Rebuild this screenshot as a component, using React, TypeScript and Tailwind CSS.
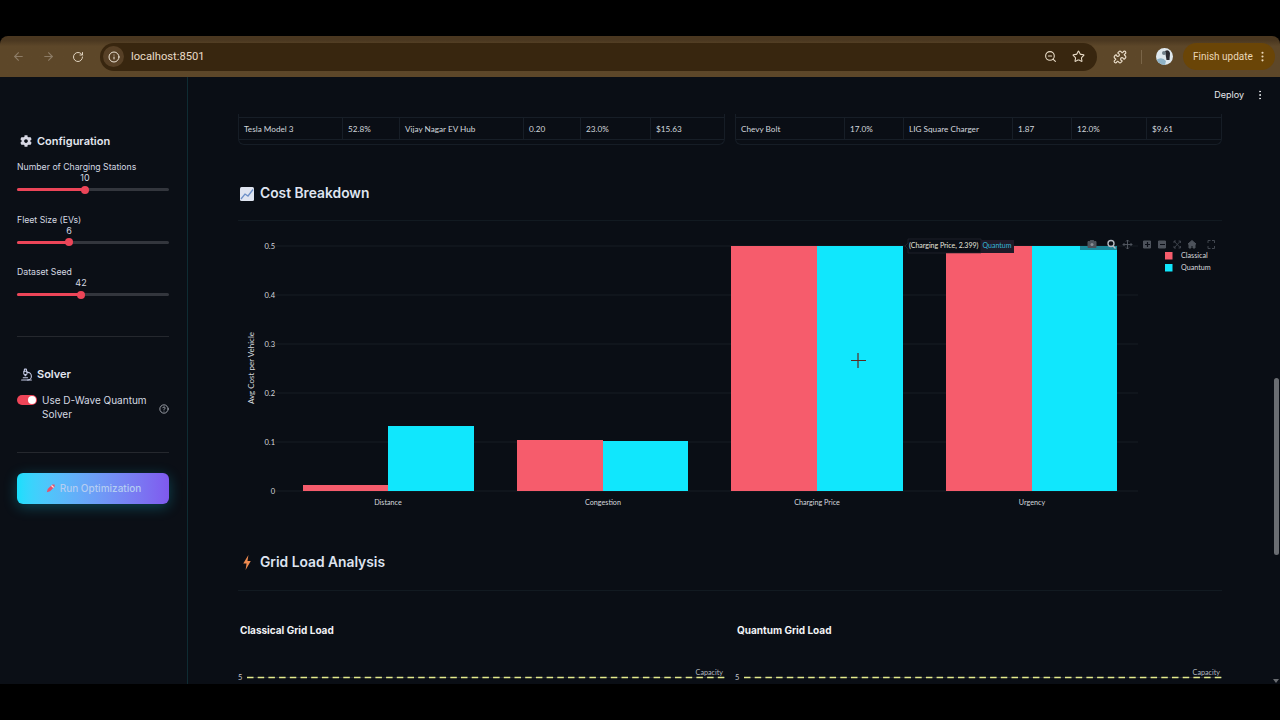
import { ArrowLeft, ArrowRight, RotateCw, Info, ZoomOut, Star, Puzzle, EllipsisVertical, CircleHelp, Microscope } from "lucide-react";
import { FaCog } from "react-icons/fa";

// slider values for the sidebar
const sliders = [
  { label: "Number of Charging Stations", value: "10", pct: 44.7 },
  { label: "Fleet Size (EVs)", value: "6", pct: 34.2 },
  { label: "Dataset Seed", value: "42", pct: 42.1 },
];

const leftRow = ["Tesla Model 3", "52.8%", "Vijay Nagar EV Hub", "0.20", "23.0%", "$15.63"];
const rightRow = ["Chevy Bolt", "17.0%", "LIG Square Charger", "1.87", "12.0%", "$9.61"];

// page coordinates, the svg viewBox starts at the chart's top left
const bars = [
  { x: 303, w: 85, top: 485, fill: "#f65c6c" },
  { x: 388, w: 86, top: 426, fill: "#10e7fd" },
  { x: 517, w: 86, top: 440, fill: "#f65c6c" },
  { x: 603, w: 85, top: 441, fill: "#10e7fd" },
  { x: 731, w: 86, top: 246, fill: "#f65c6c" },
  { x: 817, w: 86, top: 246, fill: "#10e7fd" },
  { x: 946, w: 86, top: 246, fill: "#f65c6c" },
  { x: 1032, w: 85, top: 246, fill: "#10e7fd" },
];

const yTicks = [
  { y: 491, t: "0" },
  { y: 442, t: "0.1" },
  { y: 393, t: "0.2" },
  { y: 344, t: "0.3" },
  { y: 295, t: "0.4" },
  { y: 246, t: "0.5" },
];

const xTicks = [
  { x: 388, t: "Distance" },
  { x: 603, t: "Congestion" },
  { x: 817, t: "Charging Price" },
  { x: 1032, t: "Urgency" },
];

function Slider({ label, value, pct }: { label: string; value: string; pct: number }) {
  return (
    <div className="w-[152px]">
      <div className="h-[12px] text-[8.7px] leading-[12px] text-[#d5d9e2]">{label}</div>
      <div className="relative h-[12px]">
        <span
          className="absolute top-0 -translate-x-1/2 text-[9px] leading-[10px] text-[#d5d9e2]"
          style={{ left: `${pct}%` }}
        >
          {value}
        </span>
      </div>
      <div className="relative flex h-[9px] items-center">
        <div className="h-[3px] w-full rounded-full bg-[#33363d]" />
        <div className="absolute left-0 h-[3px] rounded-full bg-[#ec4558]" style={{ width: `${pct}%` }} />
        <div
          className="absolute h-[8px] w-[8px] -translate-x-1/2 rounded-full bg-[#ec4558]"
          style={{ left: `${pct}%` }}
        />
      </div>
    </div>
  );
}

function Sidebar() {
  return (
    <aside className="flex h-full w-[188px] shrink-0 flex-col border-r border-[#0f2c33] bg-[#0b0f16] pl-[17px] pt-[54px]">
      <div className="flex h-[20px] items-center gap-[5px] pl-[3px] text-[11px] font-semibold text-[#e4e7f0]">
        <FaCog className="h-[12px] w-[12px] text-[#d8d8e4]" />
        Configuration
      </div>
      <div className="mt-[10px] flex flex-col gap-[19.5px]">
        {sliders.map((s) => (
          <Slider key={s.label} {...s} />
        ))}
      </div>
      <div className="mt-[37px] h-px w-[152px] bg-[#25282e]" />
      <div className="mt-[27px] flex h-[20px] items-center gap-[4px] pl-[3px] text-[11px] font-semibold text-[#e4e7f0]">
        <Microscope className="h-[13px] w-[13px] text-[#c5cbe6]" />
        Solver
      </div>
      <div className="mt-[9px] flex w-[152px] items-start">
        <div className="mt-[2px] flex h-[10px] w-[20px] shrink-0 items-center justify-end rounded-full bg-[#ef4558] pr-[1px]">
          <div className="h-[8px] w-[8px] rounded-full bg-white" />
        </div>
        <div className="ml-[5px] w-[112px] text-[10px] leading-[14px] text-[#d5d9e2]">Use D-Wave Quantum Solver</div>
        <CircleHelp className="ml-auto mt-[3px] h-[10px] w-[10px] self-center text-[#b5b8c0]" />
      </div>
      <div className="mt-[31px] h-px w-[152px] bg-[#25282e]" />
      <button className="mt-[20px] flex h-[31px] w-[152px] items-center justify-center gap-[4px] rounded-[6px] bg-gradient-to-r from-[#17dffd] to-[#7f59ee] text-[10px] font-medium text-[#b4cdf2] shadow-[0_3px_14px_rgba(20,200,230,0.3)]">
        <svg viewBox="0 0 12 12" className="h-[11px] w-[11px]">
          <path d="M2 10 L3 6.5 L8 1.5 L10.5 1.5 L10.5 4 L5.5 9 Z" fill="#e8506a" />
          <path d="M7 2.5 L9.5 5" stroke="#f0d8e0" strokeWidth="1.2" />
          <circle cx="8.2" cy="3.8" r="0.9" fill="#f5e6ea" />
        </svg>
        Run Optimization
      </button>
    </aside>
  );
}

function BrowserBar() {
  return (
    <div className="flex h-[41px] shrink-0 items-center rounded-t-[8px] bg-gradient-to-b from-[#4a3720] from-10% to-[#5d4729] to-25% pl-[12px] pr-[5px] text-[#e9dcc8]">
      <ArrowLeft className="h-[13px] w-[13px] text-[#8d7c66]" />
      <ArrowRight className="ml-[17px] h-[13px] w-[13px] text-[#8d7c66]" />
      <RotateCw className="ml-[17px] h-[12px] w-[12px] text-[#e0d3bf]" />
      <div className="ml-[16px] flex h-[28px] flex-1 items-center rounded-full bg-[#38260f] pl-[3px] pr-[12px]">
        <div className="flex h-[21px] w-[21px] items-center justify-center rounded-full bg-[#574026]">
          <Info className="h-[12px] w-[12px] text-[#efe6d8]" />
        </div>
        <span className="ml-[7px] pt-[2px] font-['Roboto',sans-serif] text-[11.2px] text-[#e9dcc8]">localhost:8501</span>
        <ZoomOut className="ml-auto h-[13px] w-[13px]" />
        <Star className="ml-[15px] h-[13px] w-[13px]" />
      </div>
      <Puzzle className="ml-[16px] h-[14px] w-[14px]" />
      <div className="ml-[14px] h-[14px] w-px bg-[#7a6548]" />
      <svg viewBox="0 0 17 17" className="ml-[14px] h-[17px] w-[17px] rounded-full">
        <rect width="17" height="17" fill="#dfe8ee" />
        <path d="M0 12 Q6 8 10 13 L9 17 H0 Z" fill="#8fb2c6" />
        <path d="M9 3 Q13 1 14 5 L13.500 12 L10.500 12 Z" fill="#2a2a30" />
        <circle cx="8" cy="5" r="2" fill="#6e7e88" />
      </svg>
      <div className="ml-[10px] flex h-[27px] w-[92px] items-center rounded-full bg-[#6a4507] pl-[10px]">
        <span className="font-['Roboto',sans-serif] text-[10px] text-[#ebd8b8]">Finish update</span>
        <EllipsisVertical className="ml-[3px] h-[13px] w-[13px] text-[#ebd8b8]" />
      </div>
    </div>
  );
}

function TableStub({ cols, row }: { cols: string; row: string[] }) {
  return (
    <div className="h-[31px] rounded-b-[6px] border-x border-b border-[#161d26] pb-[5px] pt-[3px]">
      <div
        className="grid h-[23px] border-y border-[#171e27] font-['Lato',sans-serif] text-[8.2px] leading-[22px] text-[#d3d7dd]"
        style={{ gridTemplateColumns: cols }}
      >
        {row.map((cell, i) => (
          <div key={cell} className={i > 0 ? "border-l border-[#171e27] pl-[5px]" : "pl-[5px]"}>
            {cell}
          </div>
        ))}
      </div>
    </div>
  );
}

function CostChart() {
  return (
    <svg viewBox="238 221 984 295" className="block h-[295px] w-[984px] font-['Lato',sans-serif]">
      {yTicks.map((t) => (
        <g key={t.t}>
          <line x1={275} x2={1138} y1={t.y} y2={t.y} stroke="#171c24" strokeWidth="1" />
          <text x={275} y={t.y + 2.5} textAnchor="end" fontSize="7.5" fill="#d5d8de">
            {t.t}
          </text>
        </g>
      ))}
      {bars.map((b) => (
        <rect key={b.x} x={b.x} y={b.top} width={b.w} height={491 - b.top} fill={b.fill} />
      ))}
      {xTicks.map((t) => (
        <text key={t.t} x={t.x} y={505} textAnchor="middle" fontSize="7.2" fill="#d5d8de">
          {t.t}
        </text>
      ))}
      <text x={254} y={368} fontSize="8" fill="#d5d8de" textAnchor="middle" transform="rotate(-90 254 368)">
        Avg Cost per Vehicle
      </text>

      {/* crosshair cursor */}
      <path d="M858 353V368M851 360.5H866" stroke="#5b2a22" strokeWidth="1.2" />

      {/* hover labels */}
      <path d="M905 246 L908 243 V239 H981 V253 H908 V249 Z" fill="#0a0e16" stroke="#2a2e36" strokeWidth="0.6" />
      <text x={909} y={248} fontSize="7" fill="#e6e6de">
        (Charging Price, 2.399)
      </text>
      <rect x={981} y={240} width={33} height={13} fill="#1f1a28" />
      <text x={982.500} y={248} fontSize="7" fill="#35b8d8">
        Quantum
      </text>

      {/* modebar */}
      <rect x={1080} y={246} width={37} height={4} fill="#1b8a9c" />
      <g fill="#4d525b" stroke="#4d525b">
        <path d="M1088 241.500h1.500l.800-1h3.400l.800 1h1.500v6h-8z" />
        <path d="M1143.500 241h7v7h-7z" />
        <path d="M1158.500 241h7v7h-7z" />
        <path d="M1192 240.500l4 3.500h-1v4h-2v-2.500h-2v2.500h-2v-4h-1z" />
      </g>
      <circle cx="1092" cy="244.500" r="1.500" fill="#8a8e96" />
      <circle cx="1111" cy="243.500" r="3" fill="none" stroke="#b5bac2" strokeWidth="1.400" />
      <path d="M1113 246l2.500 2.500" stroke="#b5bac2" strokeWidth="1.400" />
      <path
        d="M1127.500 240v9M1123 244.500h9M1127.500 240l-1.500 1.500M1127.500 240l1.500 1.500M1127.500 249l-1.500-1.500M1127.500 249l1.500-1.500M1123 244.500l1.500-1.500M1123 244.500l1.500 1.500M1132 244.500l-1.500-1.500M1132 244.500l-1.500 1.500"
        stroke="#565b64"
        strokeWidth="0.900"
        fill="none"
      />
      <path d="M1145 244.500h5M1147.500 242v5M1160 244.500h5" stroke="#0a0e16" strokeWidth="1.200" />
      <path
        d="M1174 241l6.500 7M1180.500 241l-6.500 7M1174 243v-2h2M1178.500 241h2v2M1174 246v2h2M1178.500 248h2v-2"
        stroke="#41464f"
        strokeWidth="0.900"
        fill="none"
      />
      <path
        d="M1208 243v-2.500h2.500M1212 240.500h2.500v2.500M1208 246v2.500h2.500M1212 248.500h2.500V246"
        stroke="#41464f"
        strokeWidth="1"
        fill="none"
      />

      {/* legend */}
      <rect x={1165} y={252} width={7.500} height={7.500} fill="#f65c6c" />
      <rect x={1165} y={264} width={7.500} height={7.500} fill="#10e7fd" />
      <text x={1181} y={258} fontSize="7.200" fill="#d8dade">
        Classical
      </text>
      <text x={1181} y={270} fontSize="7.200" fill="#d8dade">
        Quantum
      </text>
    </svg>
  );
}

function GridLoadCard({ title }: { title: string }) {
  return (
    <div className="w-[487px]">
      <div className="h-[14px] pl-[2px] text-[10px] font-bold leading-[14px] text-[#f2f3f6]">{title}</div>
      <svg viewBox="0 0 487 46" className="block h-[46px] w-[487px] font-['Lato',sans-serif]">
        <line x1="9" x2="487" y1="40.500" y2="40.500" stroke="#3a3e44" strokeWidth="0.600" />
        <line x1="9" x2="487" y1="40.500" y2="40.500" stroke="#e4ea8c" strokeWidth="1.500" strokeDasharray="6.500 4.200" />
        <text x="0" y="43" fontSize="7.500" fill="#c5c9d0">
          5
        </text>
        <text x="485" y="37.500" textAnchor="end" fontSize="7.200" fill="#b5b9c0">
          Capacity
        </text>
      </svg>
    </div>
  );
}

export default function App() {
  return (
    <div className="flex h-[720px] w-[1280px] flex-col overflow-hidden bg-black font-['Inter',sans-serif]">
      <div className="h-[36px] shrink-0" />
      <BrowserBar />
      <div className="relative flex h-[607px] shrink-0 overflow-hidden bg-[#0a0e15]">
        <Sidebar />
        <main className="flex min-w-0 flex-1 flex-col">
          <div className="flex h-[36px] shrink-0 items-center justify-end pr-[14px] text-[#e6e8ec]">
            <span className="text-[9px]">Deploy</span>
            <EllipsisVertical className="ml-[10px] h-[12px] w-[12px]" />
          </div>
          <div className="pl-[50px] pr-[58px] pt-[1px]">
            <div className="flex justify-between">
              <div className="w-[487px]">
                <TableStub cols="103px 57px 124px 57px 70px 1fr" row={leftRow} />
              </div>
              <div className="w-[487px]">
                <TableStub cols="108px 59px 109px 59px 75px 1fr" row={rightRow} />
              </div>
            </div>

            <div className="mt-[38px] flex h-[20px] items-center gap-[6px] pl-[2px] pt-[1px] text-[13.8px] font-semibold text-[#dfe4f0]">
              <svg viewBox="0 0 14 14" className="h-[14px] w-[14px]">
                <rect x="0" y="0" width="14" height="14" rx="1.500" fill="#dfe4f0" />
                <path d="M1 12 L5 7 L8 9 L13 2.500" stroke="#6e90c8" strokeWidth="1.300" fill="none" />
              </svg>
              Cost Breakdown
            </div>
            <div className="mt-[17px] h-px bg-[#121a21]" />
            <CostChart />

            <div className="mt-[36px] flex h-[20px] items-center gap-[8px] pl-[4px] text-[13.8px] font-semibold text-[#dfe4f0]">
              <svg viewBox="0 0 10 16" className="h-[15px] w-[10px]">
                <path d="M6.500 0 L1 9 H4.500 L3.500 16 L9 6.500 H5.500 Z" fill="#ee8a50" />
              </svg>
              Grid Load Analysis
            </div>
            <div className="mt-[18px] h-px bg-[#121a21]" />
            <div className="mt-[32px] flex justify-between">
              <GridLoadCard title="Classical Grid Load" />
              <GridLoadCard title="Quantum Grid Load" />
            </div>
          </div>
        </main>

        {/* page scrollbar */}
        <div className="absolute bottom-0 right-0 top-0 w-[8px]">
          <div className="absolute right-[1px] top-[301px] h-[177px] w-[5px] rounded-full bg-[#6a6d72]" />
          <div className="absolute bottom-[1px] right-[1px] h-0 w-0 border-x-[3px] border-t-[4px] border-x-transparent border-t-[#6a6d72]" />
        </div>
      </div>
    </div>
  );
}
